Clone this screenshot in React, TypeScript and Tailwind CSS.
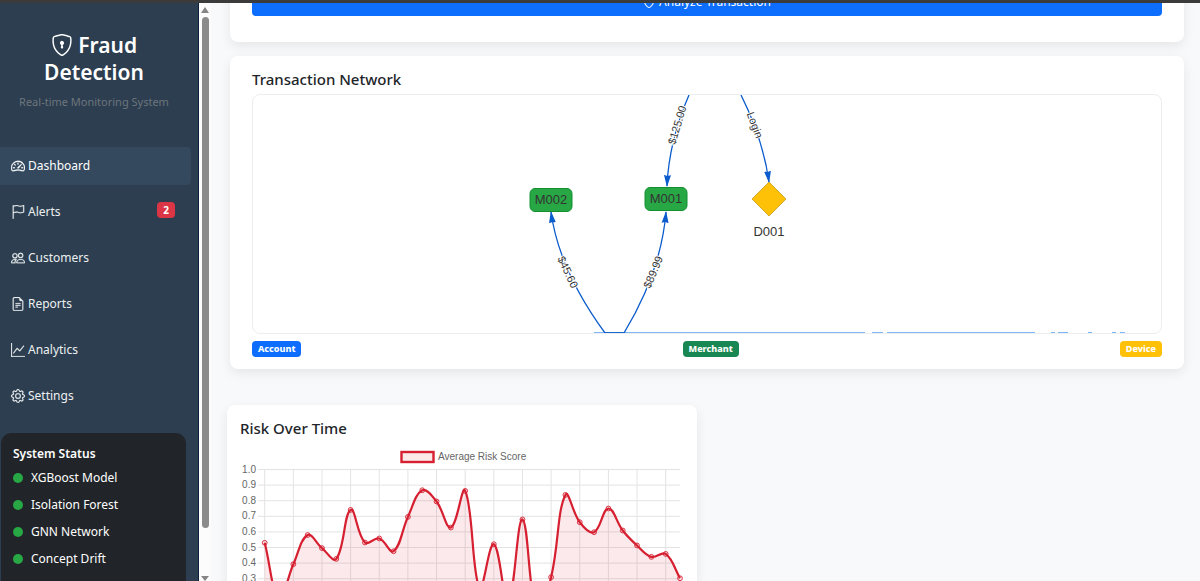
import { ReactNode } from 'react';
import {
  BsFileEarmarkText,
  BsFlag,
  BsGear,
  BsGraphUp,
  BsPeople,
  BsShieldCheck,
  BsShieldLock,
  BsSpeedometer2,
} from 'react-icons/bs';

const navItems = [
  { label: 'Dashboard', icon: BsSpeedometer2, active: true },
  { label: 'Alerts', icon: BsFlag, badge: 2 },
  { label: 'Customers', icon: BsPeople },
  { label: 'Reports', icon: BsFileEarmarkText },
  { label: 'Analytics', icon: BsGraphUp },
  { label: 'Settings', icon: BsGear },
];

const services = ['XGBoost Model', 'Isolation Forest', 'GNN Network', 'Concept Drift'];

const riskScores = [
  0.53, 0.17, 0.393, 0.58, 0.496, 0.427, 0.741, 0.532, 0.558, 0.476,
  0.696, 0.867, 0.795, 0.628, 0.863, 0.24, 0.521, 0.15, 0.68, 0.08,
  0.31, 0.837, 0.662, 0.598, 0.75, 0.609, 0.513, 0.44, 0.459, 0.303,
];

const edges = [
  { label: '$125.00', d: 'M436 0 Q416 46 414 91', x: 424, y: 30, angle: -73 },
  { label: 'Login', d: 'M488 0 Q510 44 516 87', x: 502, y: 30, angle: 69 },
  { label: '$45.60', d: 'M352 238 Q306 175 298 117', x: 315, y: 177, angle: 65 },
  { label: '$89.99', d: 'M371 238 Q408 177 413 117', x: 400, y: 177, angle: -67 },
];

const merchants = [
  { label: 'M002', x: 298, y: 105 },
  { label: 'M001', x: 413, y: 104 },
];

// [start, width] of the edges that run along the bottom of the canvas
const bottomEdges = [[341, 271], [619, 11], [634, 148], [798, 4], [805, 10], [835, 4], [859, 4], [867, 5]];

const Sidebar = () => (
  <aside className="w-[199px] shrink-0 bg-[#2c3e50] border-r border-[#0b1f3f] text-white flex flex-col">
    <div className="pl-4 pt-[29px] pr-[26px] text-center">
      <h1 className="text-[21px] leading-[27px] font-semibold">
        <BsShieldLock className="inline w-[22px] h-[22px] align-[-3px]" /> Fraud Detection
      </h1>
      <p className="mt-2 -mx-2 text-[11px] leading-4 text-[#6c757d] whitespace-nowrap">Real-time Monitoring System</p>
    </div>

    <nav className="mt-[37px] mr-[7px] flex flex-col gap-2">
      {navItems.map(({ label, icon: Icon, active, badge }) => (
        <a
          key={label}
          href="#"
          className={`flex items-center h-[38px] pl-[11px] pr-4 rounded-r text-[12px] ${active ? 'bg-[#34495e] text-white' : 'text-[#ecf0f1]'}`}
        >
          <Icon className="w-[14px] h-[14px] mr-[3px]" strokeWidth="0.3" />
          {label}
          {badge && (
            <span className="ml-auto mb-1 px-[6px] rounded bg-[#dc3545] text-[10px] leading-4 font-bold text-white">{badge}</span>
          )}
        </a>
      ))}
    </nav>

    <section className="mt-[18px] ml-px mr-3 flex-1 rounded-t-[10px] bg-[#212529] px-3 pt-[11px]">
      <h2 className="text-[12px] leading-5 font-semibold">System Status</h2>
      <ul className="text-[12px] leading-[27px]">
        {services.map(name => (
          <li key={name} className="flex items-center">
            <span className="w-[10px] h-[10px] mr-2 rounded-full bg-[#28a745]" />
            {name}
          </li>
        ))}
      </ul>
    </section>
  </aside>
);

const ScrollTrack = () => (
  <div className="w-3 shrink-0 bg-[#fcfcfc] flex flex-col items-center pt-1">
    <svg viewBox="0 0 8 6" className="w-2 h-[6px] mb-1" fill="#858585"><path d="M4 0 8 6H0Z" /></svg>
    <div className="w-[7px] h-[89%] rounded-full bg-[#8b8b8b]" />
    <svg viewBox="0 0 8 6" className="w-2 h-[6px] mt-auto" fill="#858585"><path d="M0 1H8L4 6Z" /></svg>
  </div>
);

const Card = ({ className = '', children }: { className?: string, children: ReactNode }) => (
  <section className={`rounded-lg bg-white shadow-[0_4px_12px_rgba(0,0,0,0.08)] ${className}`}>{children}</section>
);

const LegendBadge = ({ color, children }: { color: string, children: ReactNode }) => (
  <span className={`rounded px-[6px] text-[9px] leading-4 font-extrabold text-white ${color}`}>{children}</span>
);

const NetworkGraph = () => (
  <svg
    viewBox="0 0 908 238"
    className="block w-full font-['Liberation_Sans',sans-serif]"
    role="img"
    aria-label="Transaction Network"
  >
    <defs>
      <marker id="arrow" viewBox="0 0 12 8" refX="11" refY="4" markerWidth="12" markerHeight="8" markerUnits="userSpaceOnUse" orient="auto">
        <path d="M0 0.5 12 4 0 7.5 1 4Z" fill="#0a5ccc" />
      </marker>
    </defs>
    {bottomEdges.map(([x, width]) => (
      <rect key={x} x={x} y="237" width={width} height="1" fill="#7fb8f5" />
    ))}
    <rect x="352" y="237" width="19" height="1" fill="#1566cf" />
    {edges.map(edge => (
      <path key={edge.label} d={edge.d} fill="none" stroke="#0a5ccc" strokeWidth="1.3" markerEnd="url(#arrow)" />
    ))}
    {edges.map(edge => (
      <text
        key={edge.label}
        transform={`translate(${edge.x} ${edge.y}) rotate(${edge.angle})`}
        textAnchor="middle"
        dy="4"
        fontSize="11"
        fill="#343434"
        stroke="#fff"
        strokeWidth="2"
        paintOrder="stroke"
      >
        {edge.label}
      </text>
    ))}
    {merchants.map(node => (
      <g key={node.label}>
        <rect x={node.x - 21} y={node.y - 11.5} width="42" height="23" rx="5" fill="#28a745" stroke="#138f30" />
        <text x={node.x} y={node.y + 4} textAnchor="middle" fontSize="13" fill="#343434">{node.label}</text>
      </g>
    ))}
    <path d="M516 87 533 104 516 121 499 104Z" fill="#ffc107" stroke="#c79a1a" strokeWidth="0.8" />
    <text x="516" y="141" textAnchor="middle" fontSize="13" fill="#343434">D001</text>
  </svg>
);

const chart = { left: 24.7, right: 440, top: 20.5, step: 15.6 };

const points = riskScores.map((score, i) => ({
  x: chart.left + (i * (chart.right - chart.left)) / (riskScores.length - 1),
  y: chart.top + (1 - score) * 10 * chart.step,
}));

const controls = points.map((p, i) => {
  const prev = points[Math.max(i - 1, 0)];
  const next = points[Math.min(i + 1, points.length - 1)];
  const before = Math.hypot(p.x - prev.x, p.y - prev.y);
  const after = Math.hypot(next.x - p.x, next.y - p.y);
  const a = (0.4 * before) / (before + after);
  const b = (0.4 * after) / (before + after);
  return {
    inX: p.x - a * (next.x - prev.x),
    inY: p.y - a * (next.y - prev.y),
    outX: p.x + b * (next.x - prev.x),
    outY: p.y + b * (next.y - prev.y),
  };
});

const linePath = points
  .map((p, i) =>
    i === 0
      ? `M${p.x} ${p.y}`
      : `C${controls[i - 1].outX} ${controls[i - 1].outY} ${controls[i].inX} ${controls[i].inY} ${p.x} ${p.y}`
  )
  .join(' ');

const RiskChart = () => {
  const bottom = chart.top + 10 * chart.step;
  return (
    <svg
      viewBox="0 0 444 190"
      className="block w-full font-['Liberation_Sans',sans-serif]"
      role="img"
      aria-label="Average Risk Score"
    >
      <rect x="161.5" y="3" width="32" height="10" fill="#fbe9ea" stroke="#d61f30" strokeWidth="2.4" />
      <text x="198" y="11" fontSize="10" fill="#666">Average Risk Score</text>
      {Array.from({ length: 11 }, (_, i) => {
        const y = chart.top + i * chart.step;
        return (
          <g key={i}>
            <line x1="18" x2={chart.right} y1={y} y2={y} stroke="#e3e3e3" />
            <text x="16" y={y + 3} textAnchor="end" fontSize="10" fill="#666">{(1 - i / 10).toFixed(1)}</text>
          </g>
        );
      })}
      {points.filter((_, i) => i % 2 === 0).map(p => (
        <line key={p.x} x1={p.x} x2={p.x} y1={chart.top} y2={bottom} stroke="#e3e3e3" />
      ))}
      <path d={`${linePath} V${bottom} H${chart.left} Z`} fill="#dc3545" fillOpacity="0.11" />
      <path d={linePath} fill="none" stroke="#d61f30" strokeWidth="2.2" />
      {points.map(p => (
        <circle key={p.x} cx={p.x} cy={p.y} r="2.4" fill="#dc3545" fillOpacity="0.1" stroke="#d61f30" strokeWidth="0.9" />
      ))}
    </svg>
  );
};

const App = () => (
  <div className="h-screen overflow-hidden flex flex-col bg-[#f8f9fa] font-['Noto_Sans',sans-serif] text-[#212529]">
    <div className="h-[3px] shrink-0 bg-[#3b3b3b]" />
    <div className="flex flex-1 min-h-0">
      <Sidebar />
      <ScrollTrack />
      <main className="flex-1 min-w-0 overflow-hidden pl-[19px] pr-4">
        <Card className="-mt-8 px-[22px] pt-4 pb-[26px]">
          <button className="w-full h-[29px] rounded bg-[#0d6efd] text-white text-[12px] flex items-center justify-center gap-1">
            <BsShieldCheck className="w-3 h-3" strokeWidth="0.3" />
            Analyze Transaction
          </button>
        </Card>

        <Card className="mt-[14px] px-[22px] pt-3 pb-3">
          <h2 className="text-[15px] leading-[22px] font-medium">Transaction Network</h2>
          <div className="mt-1 rounded-lg border border-[#ebedef] overflow-hidden">
            <NetworkGraph />
          </div>
          <div className="mt-[7px] flex justify-between">
            <LegendBadge color="bg-[#0d6efd]">Account</LegendBadge>
            <LegendBadge color="bg-[#198754]">Merchant</LegendBadge>
            <LegendBadge color="bg-[#ffc107]">Device</LegendBadge>
          </div>
        </Card>

        <div className="mt-9 -mx-[3px] grid grid-cols-2 gap-5">
          <Card className="px-[13px] pt-3 pb-4">
            <h2 className="text-[15px] leading-[22px] font-medium mb-[10px]">Risk Over Time</h2>
            <RiskChart />
          </Card>
        </div>
      </main>
    </div>
  </div>
);

export default App;
